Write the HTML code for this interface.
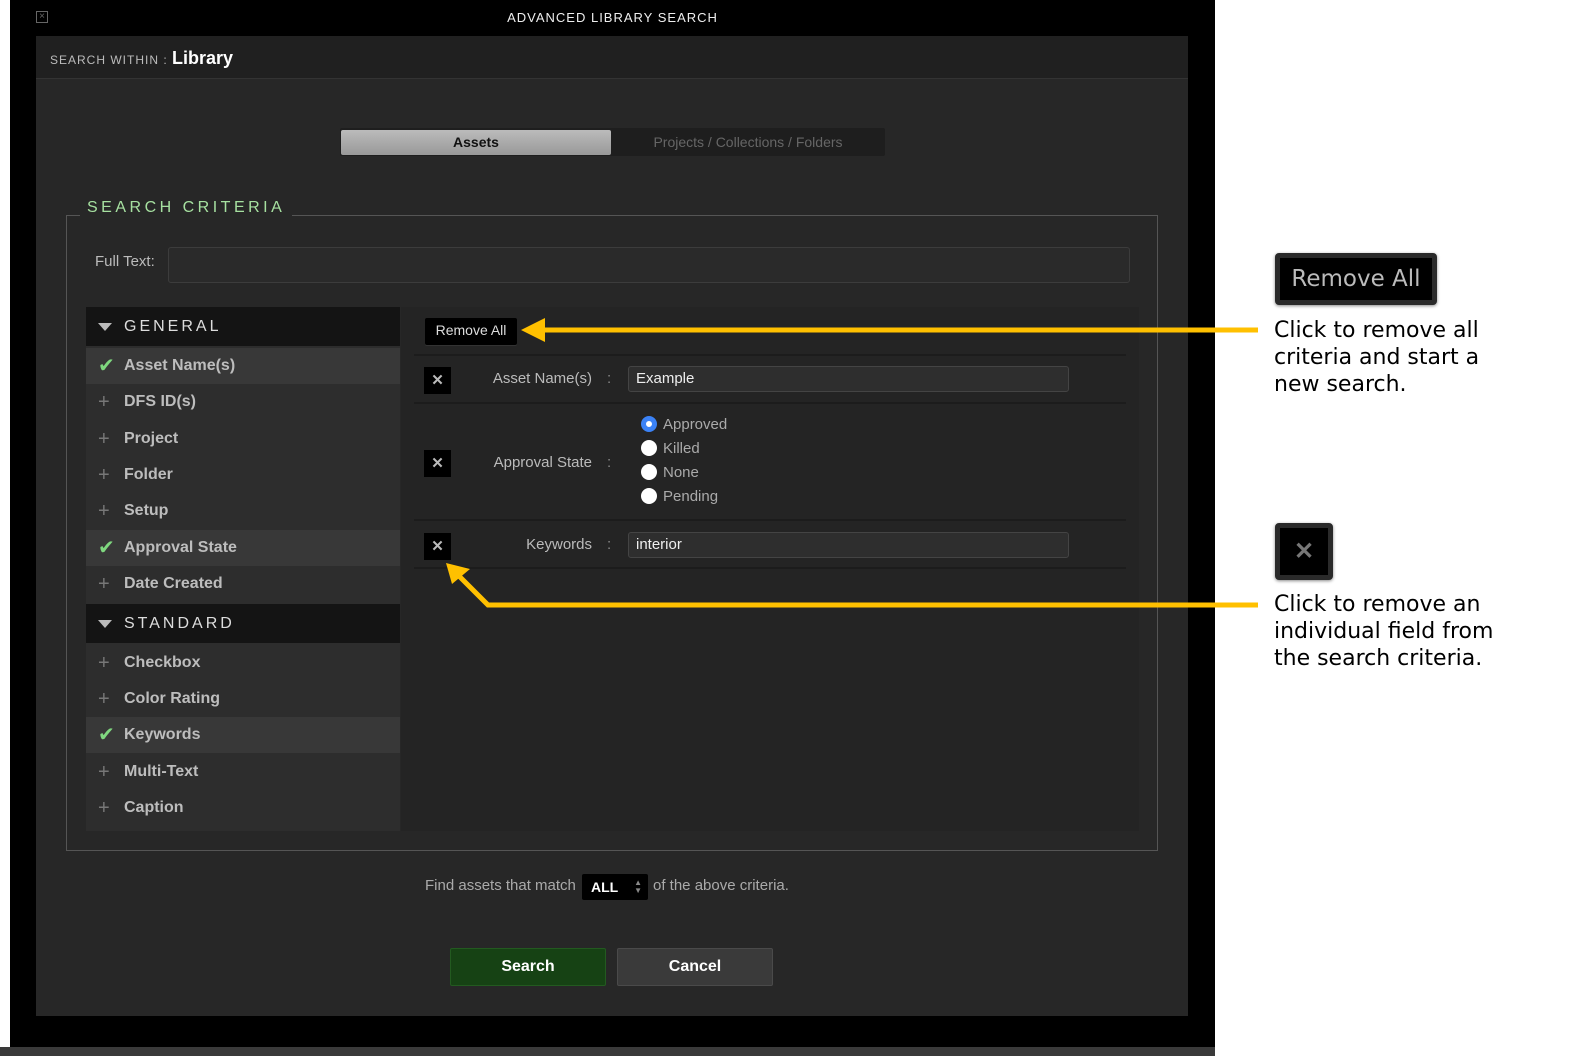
<!DOCTYPE html>
<html><head><style>
*{margin:0;padding:0;box-sizing:border-box}
body{width:1580px;height:1056px;background:#fff;position:relative;overflow:hidden;font-family:"Liberation Sans",sans-serif}
.a{position:absolute}
.side div.it{position:absolute;left:0;width:314px;height:36px;color:#bdbdbd;font-size:16px;line-height:36px;padding-left:38px;font-weight:bold}
.side .ic{position:absolute;left:12px;top:0;font-size:20px;color:#777;font-weight:normal}
.side .ck{color:#7fd77f}
.hd{position:absolute;left:0;width:314px;height:39px;background:#141414;color:#ddd;font-size:16px;letter-spacing:3px;line-height:39px;padding-left:38px}
.hd:before{content:"";position:absolute;left:12px;top:16px;border-left:7px solid transparent;border-right:7px solid transparent;border-top:8px solid #bbb}
.x{position:absolute;left:424px;width:27px;height:27px;background:#000;color:#bbb;font-size:15px;text-align:center;line-height:27px;font-weight:bold}
.lbl{position:absolute;width:180px;left:412px;text-align:right;color:#bbb;font-size:15px}
.col{position:absolute;left:607px;color:#888;font-size:15px}
.inp{position:absolute;left:628px;width:441px;height:26px;background:#2e2e2e;border:1px solid #444;border-radius:3px;color:#eee;font-size:15px;padding-left:7px;line-height:24px}
.rad{position:absolute;left:641px;color:#aaa;font-size:15px}
.rad i{display:inline-block;width:16px;height:16px;border-radius:50%;background:#fff;vertical-align:-3px;margin-right:6px}
.ln{position:absolute;left:414px;width:712px;height:2px;background:#1c1c1c}
.ann{position:absolute;left:1274px;font-family:"DejaVu Sans",sans-serif;font-size:22px;line-height:27px;color:#000}
</style></head><body>
<div class="a" style="left:10px;top:0;width:1205px;height:1047px;background:#000"></div>
<div class="a" style="left:0;top:1047px;width:1215px;height:9px;background:#3a3a3a"></div>
<div class="a" style="left:36px;top:11px;width:12px;height:12px;border:1px solid #666;color:#666;font-size:10px;line-height:10px;text-align:center">×</div>
<div class="a" style="left:10px;top:10px;width:1205px;text-align:center;color:#eee;font-size:13px;letter-spacing:1px">ADVANCED LIBRARY SEARCH</div>
<div class="a" style="left:36px;top:36px;width:1152px;height:980px;background:#272727"></div>
<div class="a" style="left:36px;top:36px;width:1152px;height:43px;background:#202020;border-bottom:1px solid #333"></div>
<div class="a" style="left:50px;top:48px;color:#bbb;font-size:12px;letter-spacing:1px">SEARCH WITHIN : <span style="color:#fff;font-size:18px;font-weight:bold;letter-spacing:0">Library</span></div>
<div class="a" style="left:340px;top:128px;width:545px;height:28px;background:#1e1e1e;border-radius:2px"></div>
<div class="a" style="left:341px;top:130px;width:270px;height:25px;background:linear-gradient(#bbb,#999);border-radius:2px;text-align:center;font-size:14px;font-weight:bold;line-height:25px;color:#111">Assets</div>
<div class="a" style="left:611px;top:130px;width:274px;height:25px;text-align:center;font-size:14px;line-height:25px;color:#666">Projects / Collections / Folders</div>
<div class="a" style="left:66px;top:215px;width:1092px;height:636px;border:1px solid #555"></div>
<div class="a" style="left:80px;top:199px;background:#272727;padding:0 7px;color:#a6e0a0;font-size:16px;letter-spacing:3.5px">SEARCH CRITERIA</div>
<div class="a" style="left:95px;top:253px;color:#bbb;font-size:15px">Full Text:</div>
<div class="a" style="left:168px;top:247px;width:962px;height:36px;background:#2a2a2a;border:1px solid #3c3c3c;border-radius:3px"></div>
<div class="a" style="left:401px;top:307px;width:738px;height:524px;background:#242424"></div>
<div class="a side" style="left:86px;top:307px;width:314px;height:524px;background:#2d2d2d">
<div class="hd" style="top:0">GENERAL</div>
<div class="it" style="top:41px;background:#383838"><span class="ic ck">✔</span>Asset Name(s)</div>
<div class="it" style="top:77px"><span class="ic">+</span>DFS ID(s)</div>
<div class="it" style="top:114px"><span class="ic">+</span>Project</div>
<div class="it" style="top:150px"><span class="ic">+</span>Folder</div>
<div class="it" style="top:186px"><span class="ic">+</span>Setup</div>
<div class="it" style="top:223px;background:#383838"><span class="ic ck">✔</span>Approval State</div>
<div class="it" style="top:259px"><span class="ic">+</span>Date Created</div>
<div class="hd" style="top:297px">STANDARD</div>
<div class="it" style="top:338px"><span class="ic">+</span>Checkbox</div>
<div class="it" style="top:374px"><span class="ic">+</span>Color Rating</div>
<div class="it" style="top:410px;background:#383838"><span class="ic ck">✔</span>Keywords</div>
<div class="it" style="top:447px"><span class="ic">+</span>Multi-Text</div>
<div class="it" style="top:483px"><span class="ic">+</span>Caption</div>
</div>
<div class="a" style="left:425px;top:318px;width:92px;height:27px;background:#000;border-radius:2px;color:#ddd;font-size:14px;line-height:25px;text-align:center;box-shadow:0 1px 0 #333">Remove All</div>
<div class="ln" style="top:354px"></div>
<div class="x" style="top:367px">✕</div>
<div class="lbl" style="top:370px">Asset Name(s)</div><div class="col" style="top:370px">:</div>
<div class="inp" style="top:366px">Example</div>
<div class="ln" style="top:402px"></div>
<div class="x" style="top:450px">✕</div>
<div class="lbl" style="top:454px">Approval State</div><div class="col" style="top:454px">:</div>
<div class="rad" style="top:416px"><i style="border:5px solid #3b82f6;background:#fff"></i>Approved</div>
<div class="rad" style="top:440px"><i></i>Killed</div>
<div class="rad" style="top:464px"><i></i>None</div>
<div class="rad" style="top:488px"><i></i>Pending</div>
<div class="ln" style="top:519px"></div>
<div class="x" style="top:533px">✕</div>
<div class="lbl" style="top:536px">Keywords</div><div class="col" style="top:536px">:</div>
<div class="inp" style="top:532px">interior</div>
<div class="ln" style="top:567px"></div>
<div class="a" style="left:425px;top:877px;color:#aaa;font-size:15px">Find assets that match</div>
<div class="a" style="left:582px;top:874px;width:66px;height:26px;background:#000;border-radius:2px;color:#fff;font-size:14px;font-weight:bold;line-height:26px;padding-left:9px">ALL<span style="position:absolute;right:6px;top:0;font-size:8px;line-height:8px;color:#888;padding-top:5px">▲<br>▼</span></div>
<div class="a" style="left:653px;top:877px;color:#aaa;font-size:15px">of the above criteria.</div>
<div class="a" style="left:450px;top:948px;width:156px;height:38px;background:#164214;border:1px solid #235a20;border-radius:2px;color:#fff;font-weight:bold;font-size:16px;text-align:center;line-height:36px">Search</div>
<div class="a" style="left:617px;top:948px;width:156px;height:38px;background:#3a3a3a;border:1px solid #4a4a4a;border-radius:2px;color:#fff;font-weight:bold;font-size:16px;text-align:center;line-height:36px">Cancel</div>
<svg class="a" style="left:0;top:0" width="1580" height="1056">
<line x1="1258" y1="330" x2="540" y2="330" stroke="#FFC000" stroke-width="5"/>
<polygon points="521,330 545,318 545,342" fill="#FFC000"/>
<polyline points="1258,605 488,605 458,575" fill="none" stroke="#FFC000" stroke-width="5"/>
<polygon points="446,563 470,569 452,584" fill="#FFC000"/>
</svg>
<div class="a" style="left:1275px;top:253px;width:162px;height:52px;background:#000;border:5px solid #2a2a2a;border-radius:4px;box-shadow:0 1px 3px #888;color:#bbb;font-size:23px;text-align:center;line-height:42px;font-family:'DejaVu Sans',sans-serif">Remove All</div>
<div class="ann" style="top:317px">Click to remove all<br>criteria and start a<br>new search.</div>
<div class="a" style="left:1275px;top:523px;width:58px;height:57px;background:#000;border:5px solid #2a2a2a;border-radius:4px;box-shadow:0 1px 3px #888;color:#777;font-size:24px;text-align:center;line-height:47px;font-weight:bold">✕</div>
<div class="ann" style="top:591px">Click to remove an<br>individual field from<br>the search criteria.</div>
</body></html>
